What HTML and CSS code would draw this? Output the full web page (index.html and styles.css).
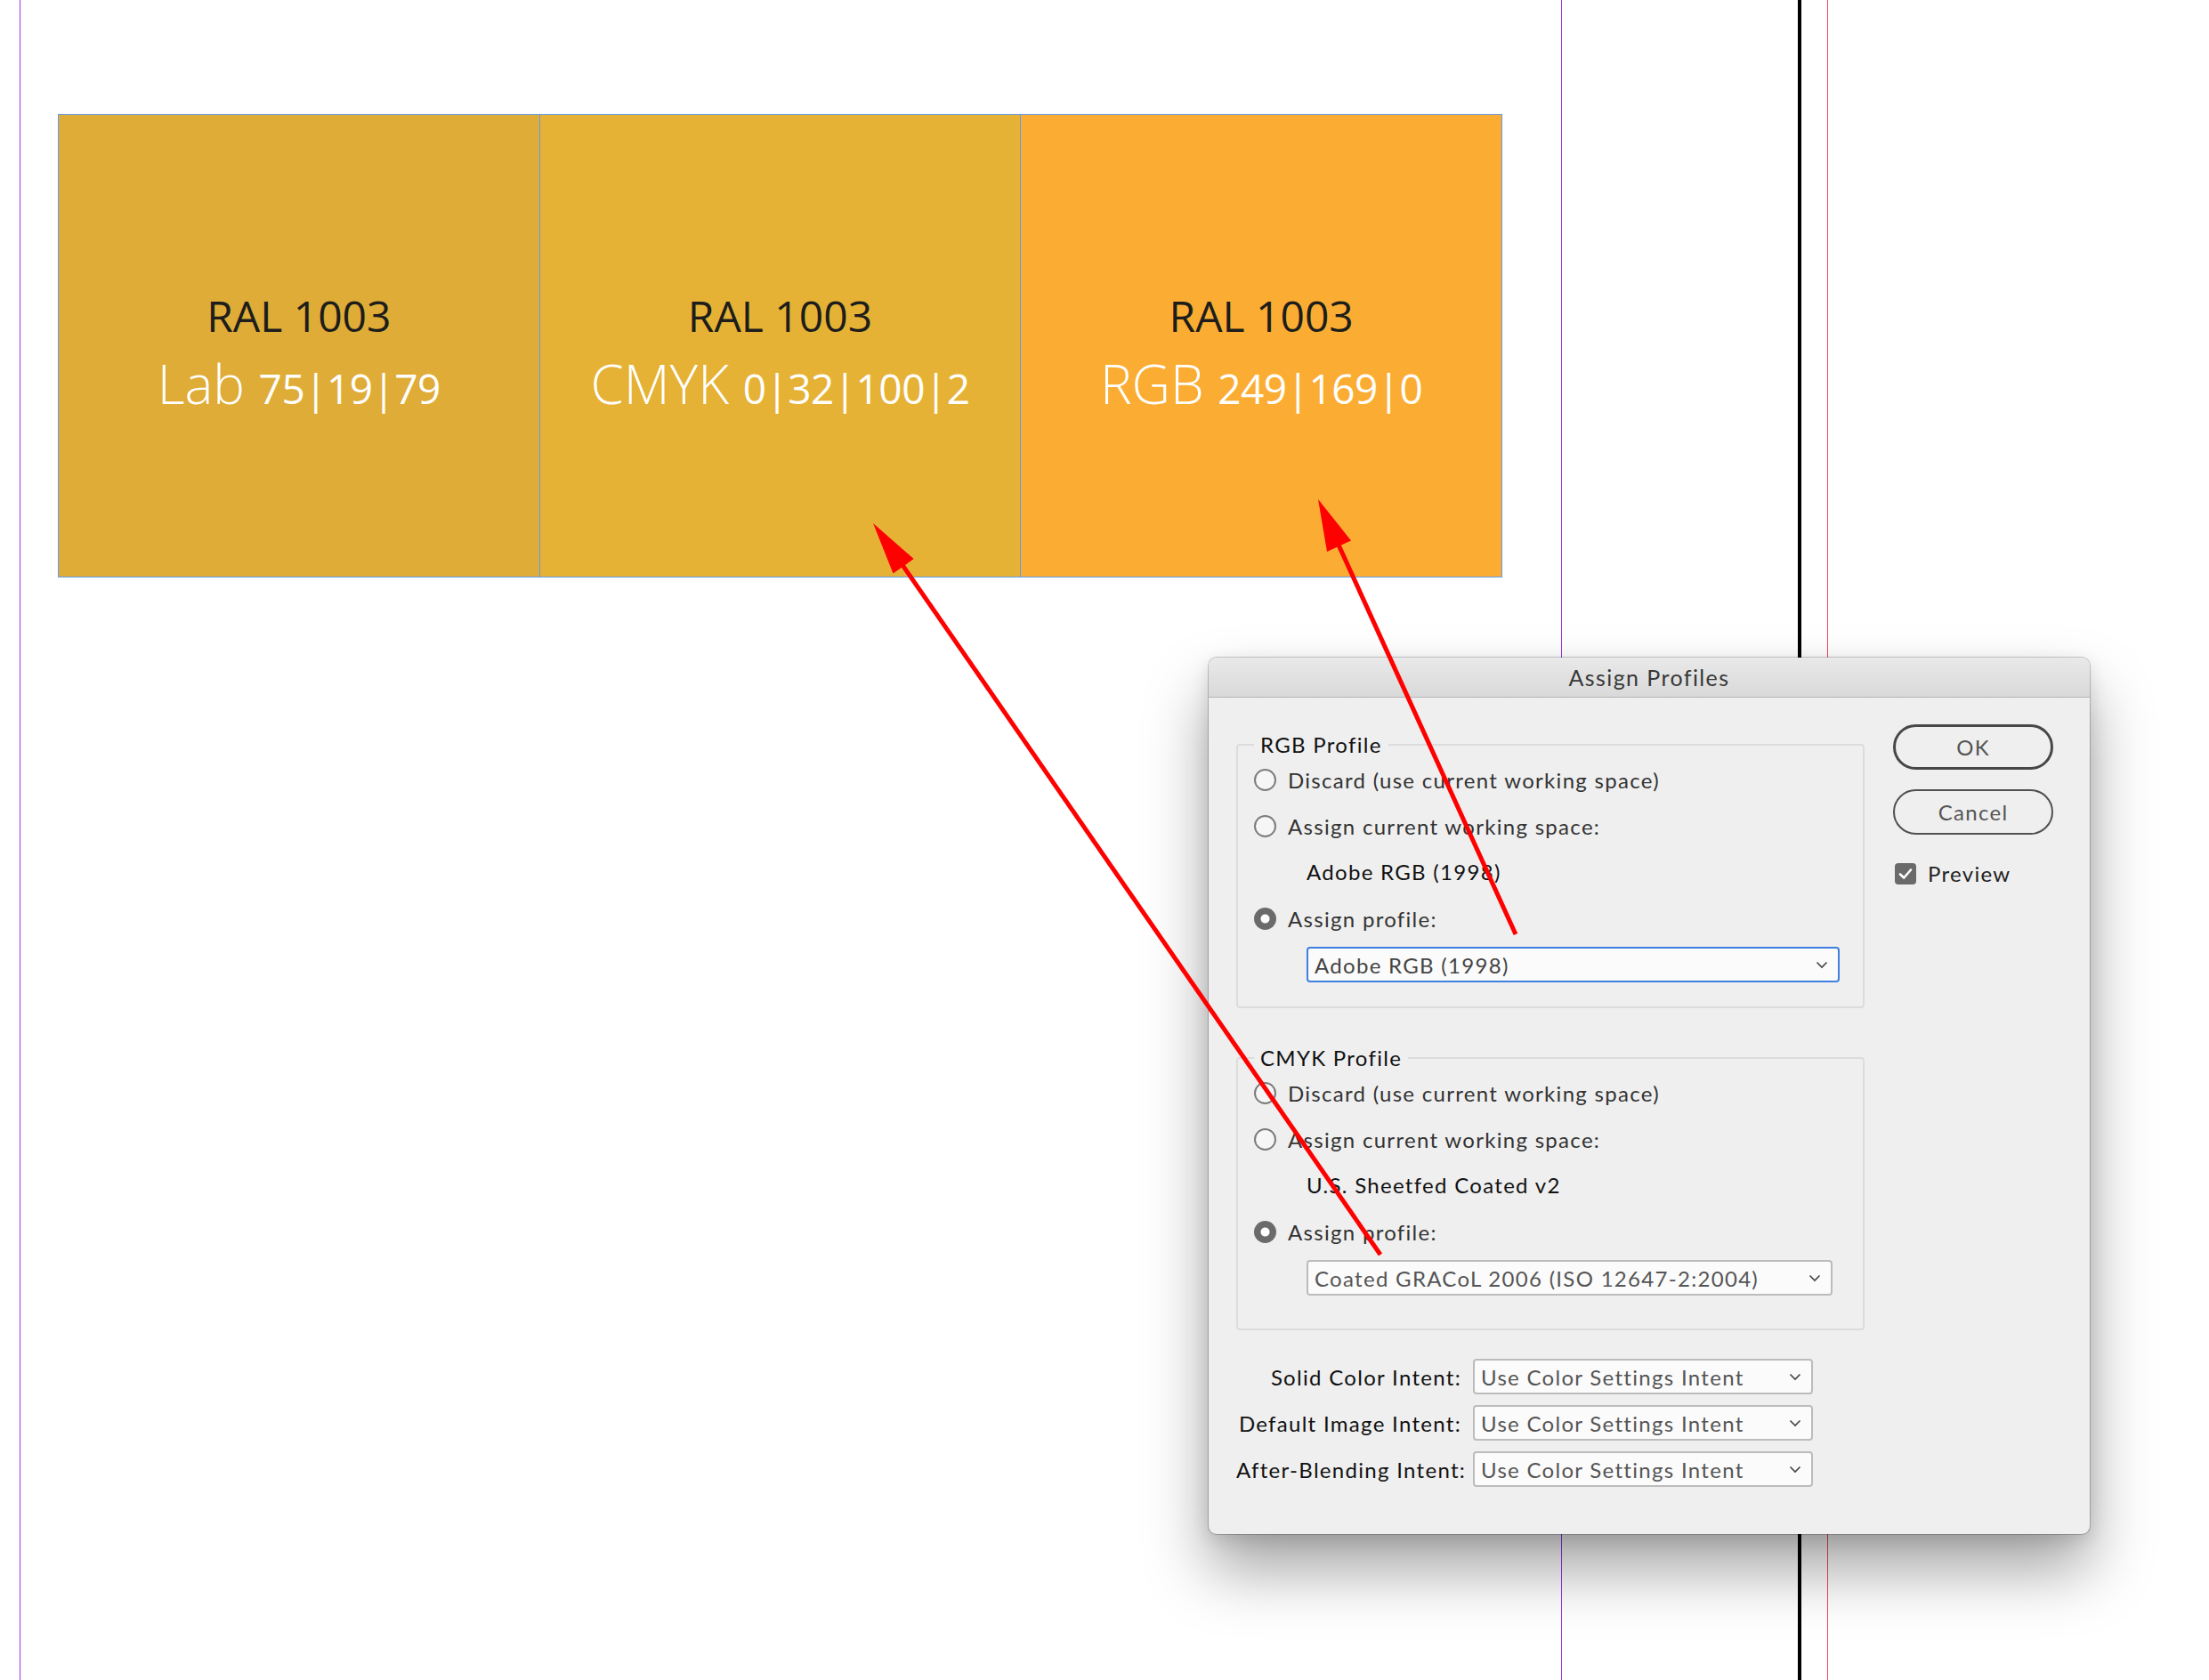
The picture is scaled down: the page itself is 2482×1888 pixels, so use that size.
FILE: index.html
```html
<!DOCTYPE html>
<html lang="en">
<head>
<meta charset="utf-8">
<title>Assign Profiles</title>
<link rel="stylesheet" href="styles.css">
</head>
<body>
<div class="canvas">
  <div class="guide guide-margin guide-margin-left"></div>
  <div class="guide guide-margin guide-margin-right"></div>
  <div class="guide guide-page-edge"></div>
  <div class="guide guide-bleed"></div>

  <div class="swatches">
    <div class="swatch swatch-lab">
      <div class="swatch-name">RAL 1003</div>
      <div class="swatch-values"><span class="mode">Lab</span> <span class="nums">75|19|79</span></div>
    </div>
    <div class="swatch swatch-cmyk">
      <div class="swatch-name">RAL 1003</div>
      <div class="swatch-values"><span class="mode">CMYK</span> <span class="nums">0|32|100|2</span></div>
    </div>
    <div class="swatch swatch-rgb">
      <div class="swatch-name">RAL 1003</div>
      <div class="swatch-values"><span class="mode">RGB</span> <span class="nums">249|169|0</span></div>
    </div>
  </div>

  <div class="dialog">
    <div class="dialog-title">Assign Profiles</div>
    <div class="dialog-body">
      <div class="dialog-main">
        <fieldset class="group group-rgb">
          <legend>RGB Profile</legend>
          <div class="option"><span class="radio"></span>Discard (use current working space)</div>
          <div class="option"><span class="radio"></span>Assign current working space:</div>
          <div class="working-space">Adobe RGB (1998)</div>
          <div class="option"><span class="radio radio-checked"></span>Assign profile:</div>
          <div class="select-row">
            <div class="select select-profile select-focused">
              <span>Adobe RGB (1998)</span>
              <svg class="chevron" viewBox="0 0 14 9" width="14" height="9"><path d="M1.5 1.5 L7 7 L12.5 1.5"/></svg>
            </div>
          </div>
        </fieldset>

        <fieldset class="group group-cmyk">
          <legend>CMYK Profile</legend>
          <div class="option"><span class="radio"></span>Discard (use current working space)</div>
          <div class="option"><span class="radio"></span>Assign current working space:</div>
          <div class="working-space">U.S. Sheetfed Coated v2</div>
          <div class="option"><span class="radio radio-checked"></span>Assign profile:</div>
          <div class="select-row">
            <div class="select select-profile select-cmyk">
              <span>Coated GRACoL 2006 (ISO 12647-2:2004)</span>
              <svg class="chevron" viewBox="0 0 14 9" width="14" height="9"><path d="M1.5 1.5 L7 7 L12.5 1.5"/></svg>
            </div>
          </div>
        </fieldset>

        <div class="intents">
          <span class="intent-label">Solid Color Intent:</span>
          <div class="select select-intent">
            <span>Use Color Settings Intent</span>
            <svg class="chevron" viewBox="0 0 14 9" width="14" height="9"><path d="M1.5 1.5 L7 7 L12.5 1.5"/></svg>
          </div>
          <span class="intent-label">Default Image Intent:</span>
          <div class="select select-intent">
            <span>Use Color Settings Intent</span>
            <svg class="chevron" viewBox="0 0 14 9" width="14" height="9"><path d="M1.5 1.5 L7 7 L12.5 1.5"/></svg>
          </div>
          <span class="intent-label">After-Blending Intent:</span>
          <div class="select select-intent">
            <span>Use Color Settings Intent</span>
            <svg class="chevron" viewBox="0 0 14 9" width="14" height="9"><path d="M1.5 1.5 L7 7 L12.5 1.5"/></svg>
          </div>
        </div>
      </div>

      <div class="dialog-side">
        <button class="btn btn-default">OK</button>
        <button class="btn">Cancel</button>
        <div class="check">
          <span class="checkbox">
            <svg viewBox="0 0 24 24" width="24" height="24"><path d="M6 12.5 L10.2 16.5 L18 7.5"/></svg>
          </span>
          Preview
        </div>
      </div>
    </div>
  </div>

  <svg class="annotations" viewBox="0 0 2482 1888" width="2482" height="1888">
    <line x1="1551" y1="1410" x2="1012" y2="632"/>
    <polygon points="981,588 1003.5,644.6 1026.7,628"/>
    <line x1="1703" y1="1050" x2="1502" y2="608"/>
    <polygon points="1481,561 1491,620 1518,607.6"/>
  </svg>
</div>
</body>
</html>
```

FILE: styles.css
```css
* {
  box-sizing: border-box;
}

html, body {
  margin: 0;
  background: #ffffff;
}

.canvas {
  position: relative;
  width: 2482px;
  height: 1888px;
  overflow: hidden;
  padding: 128px 0 0 65px;
  background: #ffffff;
}

/* layout guides of the page spread */
.guide {
  position: absolute;
  top: 0;
  bottom: 0;
  width: 1px;
}

.guide-margin {
  background: #9433f2;
}

.guide-margin-left {
  left: 22px;
}

.guide-margin-right {
  left: 1754px;
}

.guide-page-edge {
  left: 2020px;
  width: 4px;
  background: #000000;
}

.guide-bleed {
  left: 2053px;
  background: #f04a60;
}

/* colour swatches */
.swatches {
  position: relative;
  display: flex;
  width: 1623px;
  height: 521px;
  border: 1px solid #5e9cf2;
  font-family: "Open Sans", "Noto Sans", sans-serif;
}

.swatch {
  flex: 1;
  display: flex;
  flex-direction: column;
  align-items: center;
  padding-top: 202px;
}

.swatch + .swatch {
  border-left: 1px solid #5e9cf2;
}

.swatch-lab {
  background: #dfac37;
}

.swatch-cmyk {
  background: #e6b236;
}

.swatch-rgb {
  background: #fbad33;
}

.swatch-name {
  font-size: 48px;
  line-height: 48px;
  color: #1d1d1b;
}

.swatch-values {
  margin-top: 12px;
  font-size: 60px;
  line-height: 80px;
  color: #ffffff;
  white-space: nowrap;
}

.swatch-values .mode {
  font-weight: 300;
}

.swatch-values .nums {
  font-size: 46px;
  line-height: 1;
  letter-spacing: -0.5px;
}

/* Assign Profiles window */
.dialog {
  position: absolute;
  left: 1358px;
  top: 739px;
  width: 990px;
  height: 985px;
  border-radius: 9px;
  background: #efefef;
  box-shadow: 0 0 0 1px rgba(0, 0, 0, 0.2), 0 40px 70px rgba(0, 0, 0, 0.36), 0 6px 20px rgba(0, 0, 0, 0.12);
  font-family: "Lato", "Noto Sans", sans-serif;
  font-size: 24px;
  letter-spacing: 1.3px;
  color: #333333;
  overflow: hidden;
}

.dialog-title {
  height: 45px;
  line-height: 44px;
  text-align: center;
  font-size: 25px;
  letter-spacing: 1.4px;
  color: #383838;
  background: linear-gradient(#e9e9e9, #d9d9d9);
  border-bottom: 1px solid #b4b4b4;
}

.dialog-body {
  display: flex;
  padding-left: 31px;
}

.dialog-main {
  width: 706px;
  padding-top: 40px;
}

.group {
  margin: 0;
  padding: 0 18px 21px 18px;
  border: 2px solid #dcdcdc;
  border-radius: 4px;
  min-width: 0;
}

.group-cmyk {
  margin-top: 43px;
  padding-bottom: 31px;
}

.group legend {
  padding: 0 7px;
  line-height: 26px;
  font-size: 24px;
  color: #111111;
}

.option {
  display: flex;
  align-items: center;
  height: 52px;
  gap: 13px;
}

.radio {
  width: 25px;
  height: 25px;
  flex: none;
  border-radius: 50%;
  border: 2px solid #7c7c7c;
  background: #f6f6f6;
}

.radio-checked {
  border: none;
  background: radial-gradient(circle, #ffffff 0 4.5px, #6b6b6b 5.5px);
}

.working-space {
  height: 52px;
  line-height: 52px;
  padding-left: 59px;
  color: #111111;
}

.select-row {
  display: flex;
  align-items: center;
  height: 52px;
  padding-left: 59px;
}

.select {
  display: flex;
  align-items: center;
  justify-content: space-between;
  height: 40px;
  padding: 0 11px 0 7px;
  border: 2px solid #bcbcbc;
  border-radius: 4px;
  background: #fbfbfb;
  color: #555555;
  white-space: nowrap;
}

.select-profile {
  width: 599px;
}

.select-cmyk {
  width: 591px;
}

.select-focused {
  border-color: #3f7fdf;
  color: #444444;
}

.chevron {
  flex: none;
  fill: none;
  stroke: #444444;
  stroke-width: 1.6;
}

.intents {
  display: grid;
  grid-template-columns: 253px 382px;
  column-gap: 13px;
  row-gap: 12px;
  margin-top: 32px;
}

.intent-label {
  align-self: center;
  text-align: right;
  color: #111111;
  white-space: nowrap;
}

.dialog-side {
  display: flex;
  flex-direction: column;
  align-items: flex-start;
  margin-left: 32px;
  padding-top: 30px;
}

.btn {
  width: 180px;
  height: 51px;
  border: 2px solid #505050;
  border-radius: 26px;
  background: transparent;
  font-family: "Lato", "Noto Sans", sans-serif;
  font-size: 24px;
  letter-spacing: 1.3px;
  color: #555555;
  padding: 0;
}

.btn-default {
  border: 3px solid #474747;
}

.btn + .btn {
  margin-top: 22px;
}

.check {
  display: flex;
  align-items: center;
  gap: 13px;
  margin-top: 29px;
  margin-left: 2px;
  color: #222222;
}

.checkbox {
  display: block;
  width: 24px;
  height: 24px;
  border-radius: 4px;
  background: #6a6a6a;
}

.checkbox svg {
  display: block;
  fill: none;
  stroke: #ffffff;
  stroke-width: 2.6;
  stroke-linecap: round;
  stroke-linejoin: round;
}

/* red callout arrows drawn over the page */
.annotations {
  position: absolute;
  left: 0;
  top: 0;
  pointer-events: none;
}

.annotations line {
  stroke: #ff0000;
  stroke-width: 5;
}

.annotations polygon {
  fill: #ff0000;
}
```
